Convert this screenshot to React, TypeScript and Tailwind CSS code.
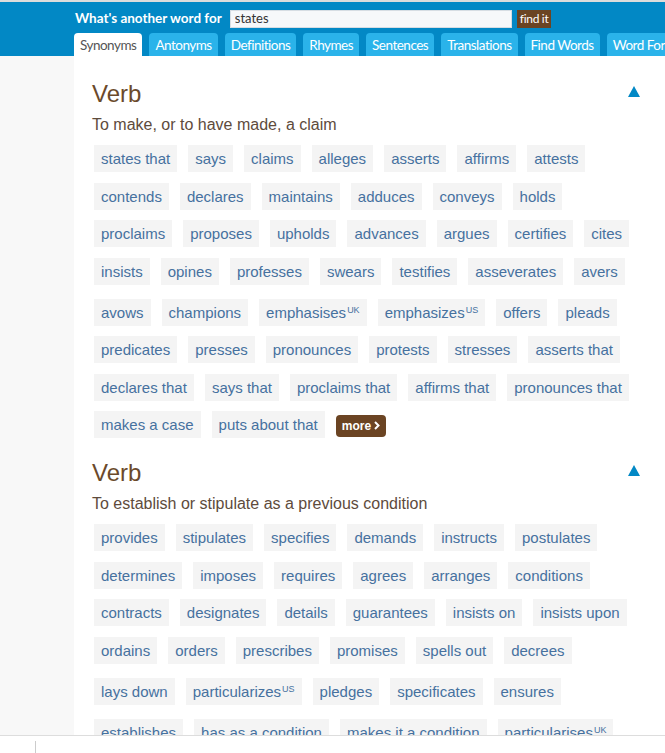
const TABS = [
  "Synonyms",
  "Antonyms",
  "Definitions",
  "Rhymes",
  "Sentences",
  "Translations",
  "Find Words",
  "Word Forms",
];

type Word = { text: string; sup?: string };

type Sense = { pos: string; gloss: string; words: Word[]; more?: boolean };

const w = (list: string) =>
  list.split(",").map((t) => {
    const [text, sup] = t.trim().split("^");
    return { text, sup };
  });

const SENSES: Sense[] = [
  {
    pos: "Verb",
    gloss: "To make, or to have made, a claim",
    words: w(
      "states that, says, claims, alleges, asserts, affirms, attests, contends, declares, maintains, adduces, conveys, holds, proclaims, proposes, upholds, advances, argues, certifies, cites, insists, opines, professes, swears, testifies, asseverates, avers, avows, champions, emphasises^UK, emphasizes^US, offers, pleads, predicates, presses, pronounces, protests, stresses, asserts that, declares that, says that, proclaims that, affirms that, pronounces that, makes a case, puts about that"
    ),
    more: true,
  },
  {
    pos: "Verb",
    gloss: "To establish or stipulate as a previous condition",
    words: w(
      "provides, stipulates, specifies, demands, instructs, postulates, determines, imposes, requires, agrees, arranges, conditions, contracts, designates, details, guarantees, insists on, insists upon, ordains, orders, prescribes, promises, spells out, decrees, lays down, particularizes^US, pledges, specificates, ensures, establishes, has as a condition, makes it a condition, particularises^UK, sets out, lays out"
    ),
    more: true,
  },
];

function Chip({ word }: { word: Word }) {
  return (
    <span
      className={`bg-[#f4f4f4] px-[7px] py-[5px] text-[15px] leading-[17px] text-[#46719f] ${
        word.sup ? "mt-[3.5px]" : ""
      }`}
    >
      {word.text}
      {word.sup && (
        <sup className="static top-0 ml-[1px] align-[5px] text-[9px] leading-none">{word.sup}</sup>
      )}
    </span>
  );
}

function SenseBlock({ sense }: { sense: Sense }) {
  return (
    <section className="mb-[21px]">
      <div className="flex items-start justify-between">
        <h2 className="text-[24px] leading-[28px] text-[#6b4a2b]">{sense.pos}</h2>
        <svg width="12" height="11" viewBox="0 0 12 11" className="mt-[6px]">
          <polygon points="6,0 12,11 0,11" fill="#0288c5" />
        </svg>
      </div>
      <p className="mt-[6px] text-[16px] leading-[22px] text-[#5e4b3c]">{sense.gloss}</p>
      <div className="ml-[2px] mt-[9px] flex flex-wrap items-end gap-x-[11px] gap-y-[10.5px]">
        {sense.words.map((word, i) => (
          <Chip key={i} word={word} />
        ))}
        {sense.more && (
          <button className="mb-[1.5px] flex h-[22px] items-center gap-[3px] rounded-[4px] bg-[#6b4423] px-[6px] text-[12px] font-bold text-white">
            more
            <svg width="6" height="9" viewBox="0 0 6 9">
              <path d="M1 1 L4.5 4.5 L1 8" stroke="white" strokeWidth="2" fill="none" />
            </svg>
          </button>
        )}
      </div>
    </section>
  );
}

export default function App() {
  return (
    <div className="min-h-screen bg-white font-['Liberation_Sans',Arial,sans-serif]">
      <header className="border-t-2 border-[#dcdcdc] bg-[#0288c5] pl-[74px] font-['Lato',sans-serif]">
        <div className="flex h-[31px] items-center pt-[2px]">
          <span className="pl-[1px] text-[13.5px] font-bold text-white">What's another word for</span>
          <input
            defaultValue="states"
            className="ml-[8px] h-[18px] w-[282px] border border-[#d6dde3] bg-[#f6f8fa] px-[4px] text-[13px] text-[#333] outline-none"
          />
          <button className="ml-[5px] h-[18px] bg-[#6b4423] px-[3px] text-[12px] leading-[18px] tracking-[-0.3px] text-white">
            find it
          </button>
        </div>
        <nav className="flex gap-[7px] overflow-hidden whitespace-nowrap">
          {TABS.map((t, i) => (
            <span
              key={t}
              className={`h-[23px] shrink-0 rounded-t-[4px] px-[6px] text-[13.5px] leading-[24px] tracking-[-0.5px] ${
                i === 0 ? "bg-white text-[#555]" : "bg-[#2ab3ea] text-white"
              }`}
            >
              {t}
            </span>
          ))}
        </nav>
      </header>
      <div className="flex">
        <aside className="w-[74px] shrink-0 bg-[#f8f8f8]" />
        <main className="flex-1 pl-[18px] pr-[25px] pt-[24px]">
          {SENSES.map((s, i) => (
            <SenseBlock key={i} sense={s} />
          ))}
        </main>
      </div>
      <div className="fixed bottom-0 left-0 right-0 h-[18px] border-t border-[#dddddd] bg-white">
        <div className="ml-[35px] mt-[5px] h-[12px] w-px bg-[#cccccc]" />
      </div>
    </div>
  );
}
